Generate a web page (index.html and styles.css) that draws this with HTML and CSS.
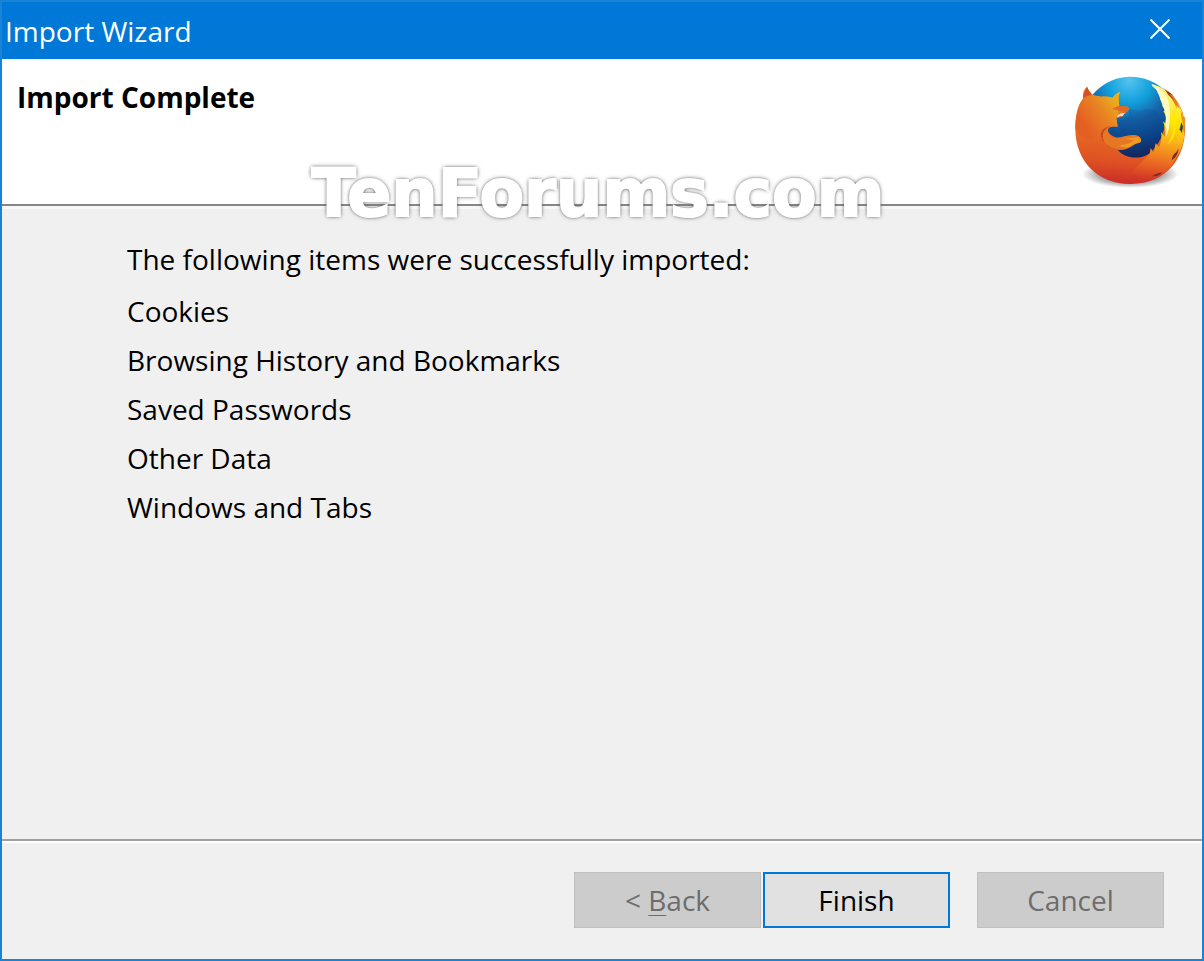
FILE: index.html
```html
<!DOCTYPE html>
<html lang="en">
<head>
    <meta charset="UTF-8">
    <meta name="viewport" content="width=device-width, initial-scale=1.0">
    <title>Import Wizard</title>
    <link rel="stylesheet" href="styles.css">
</head>
<body>
    <div class="window">
        <div class="title-bar">
            <span class="title">Import Wizard</span>
            <button type="button" class="close-btn" aria-label="Close">
                <svg width="20" height="20" viewBox="0 0 20 20" fill="none" stroke="#fff" stroke-width="2">
                    <path d="M0.500 0.500L19.500 19.500M19.500 0.500L0.500 19.500"/>
                </svg>
            </button>
        </div>

        <header class="wizard-header">
            <h1>Import Complete</h1>
            <svg class="logo" viewBox="39 30 342 345" aria-hidden="true">
                <defs>
                    <radialGradient id="globe" gradientUnits="userSpaceOnUse" cx="208" cy="45" r="240">
                        <stop offset="0" stop-color="#55c3ef"/>
                        <stop offset="0.28" stop-color="#12a0dc"/>
                        <stop offset="0.5" stop-color="#1763aa"/>
                        <stop offset="0.75" stop-color="#0a4589"/>
                        <stop offset="1" stop-color="#1a1e51"/>
                    </radialGradient>
                    <linearGradient id="body" gradientUnits="userSpaceOnUse" x1="170" y1="90" x2="150" y2="357">
                        <stop offset="0" stop-color="#eb981e"/>
                        <stop offset="0.4" stop-color="#e66c23"/>
                        <stop offset="0.75" stop-color="#df5124"/>
                        <stop offset="1" stop-color="#c92a27"/>
                    </linearGradient>
                    <linearGradient id="head" gradientUnits="userSpaceOnUse" x1="80" y1="190" x2="175" y2="120">
                        <stop offset="0" stop-color="#e46022"/>
                        <stop offset="0.6" stop-color="#e98522"/>
                        <stop offset="1" stop-color="#e9ad1d"/>
                    </linearGradient>
                    <linearGradient id="tail" gradientUnits="userSpaceOnUse" x1="325" y1="70" x2="275" y2="345">
                        <stop offset="0" stop-color="#fff18c"/>
                        <stop offset="0.35" stop-color="#ffe500"/>
                        <stop offset="0.55" stop-color="#f9b51a"/>
                        <stop offset="0.8" stop-color="#ec6c21"/>
                        <stop offset="1" stop-color="#df5124" stop-opacity="0"/>
                    </linearGradient>
                    <radialGradient id="shadow">
                        <stop offset="0" stop-color="#000" stop-opacity="0.8"/>
                        <stop offset="0.6" stop-color="#000" stop-opacity="0.4"/>
                        <stop offset="1" stop-color="#000" stop-opacity="0"/>
                    </radialGradient>
                </defs>
                <ellipse cx="211" cy="327" rx="145" ry="42" fill="url(#shadow)"/>
                <circle cx="212" cy="182" r="147" fill="url(#globe)"/>
                <path d="M238 137Q274 124 298 145L302 230L264 267Q232 286 194 269L176 250Q225 258 242 231Q226 208 198 214Q178 207 177 171L207 151L207 133Z" fill="#0a3678" opacity="0.15"/>
                <!-- body -->
                <path d="M69 101C68 85 73 72 81 66C86 76 92 85 99 91L124 95Q142 94 158 98Q166 84 181 80C174 91 176 109 178 123L204 125Q209 132 203 139Q193 146 187 154L169 160L173 185Q151 182 141 192C146 208 165 223 185 216Q201 213 215 212Q236 208 243 225C246 235 231 233 222 239C207 249 197 256 174 255C192 278 235 287 267 266Q310 232 318 160L326 80C360 107 376 150 375 190C376 275 323 357 211 357C115 357 46 290 46 192C46 151 54 119 69 101Z" fill="url(#body)"/>
                <path d="M69 101C68 85 73 72 81 66C86 76 92 85 99 91L124 95Q142 94 158 98Q166 84 181 80C174 91 176 109 178 123L169 160L173 185Q149 180 134 192Q117 204 137 224C93 216 73 239 46 192C46 151 54 119 69 101Z" fill="url(#head)"/>
                <path d="M70 99Q70 81 81 66Q85 78 97 89Q79 92 70 99Z" fill="#d94e29"/>
                <path d="M156 131L177 122L203 125Q209 132 203 139Q193 146 187 154L168 158Q177 144 193 140Q178 139 156 131Z" fill="#df6a25"/>
                <path d="M172 151Q181 143 195 143L187 154Q179 150 172 158Z" fill="#fbdfc4"/>
                <path d="M120 214Q118 190 151 182Q137 196 150 213Q166 225 194 214Q240 203 243 225C246 235 231 233 222 239C206 250 187 259 158 248Q126 238 128 209Z" fill="#e67824"/>
                <path d="M122 214Q119 191 150 183Q130 194 128 209Q126 238 158 248Q132 240 122 214Z" fill="#c9441f"/>
                <path d="M194 222Q219 218 238 216Q246 226 241 231Q219 237 208 245Q190 250 178 241Q213 238 222 226Z" fill="#ee9b23"/>
                <!-- tail -->
                <path d="M275 57C305 65 342 87 356 119C366 136 373 166 371 190Q379 235 347 280Q327 324 286 334Q249 340 211 326Q250 286 269 266L272 249L281 263L287 235L297 247Q308 222 303 201L314 215Q317 190 309 168L321 180Q321 154 310 139L315 136L306 121L314 118L300 103L309 101L291 82L301 85L276 63Z" fill="url(#tail)"/>
                <path d="M280 58Q309 76 323 102Q331 126 330 158L326 193L319 215Q322 197 316 178Q322 147 307 119Q298 87 280 58Z" fill="#fff9be"/>
                <path d="M308 68Q348 88 360 132L349 121L351 133Q337 97 320 85L325 86Z" fill="#e37d24"/>
                <path d="M315 74L340 91L328 87L345 107L326 91Z" fill="#933823"/>
                <path d="M362 137Q368 147 370 161L376 154Q377 185 365 214Q373 184 364 158Z" fill="#e69321"/>
                <path d="M364 171L369 185L365 204L359 193Z" fill="#344051"/>
                <path d="M356 250Q354 275 335 286Q338 268 349 262ZM306 322Q299 335 276 334L288 327Z" fill="#762b26"/>
                <path d="M342 131Q357 178 338 222L322 241Q350 193 336 163Z" fill="#ffea00"/>
            </svg>
            <div class="watermark">TenForums.com</div>
        </header>

        <main class="content">
            <p>The following items were successfully imported:</p>
            <ul class="items">
                <li>Cookies</li>
                <li>Browsing History and Bookmarks</li>
                <li>Saved Passwords</li>
                <li>Other Data</li>
                <li>Windows and Tabs</li>
            </ul>
        </main>

        <footer class="actions">
            <button type="button" disabled>&lt; <span class="access-key">B</span>ack</button>
            <button type="button" class="finish-btn">Finish</button>
            <button type="button" class="cancel-btn" disabled>Cancel</button>
        </footer>
    </div>
</body>
</html>
```

FILE: styles.css
```css
* {
    margin: 0;
    padding: 0;
    box-sizing: border-box;
}

body {
    font-family: "Open Sans", "Noto Sans", sans-serif;
    font-size: 28px;
    line-height: 40px;
    color: #000;
}

.window {
    display: flex;
    flex-direction: column;
    min-height: 100vh;
    border: 2px solid #1883d7;
    background-color: #f0f0f0;
}

.title-bar {
    display: flex;
    justify-content: space-between;
    align-items: center;
    height: 57px;
    padding-left: 3px;
    background-color: #0078d7;
    color: white;
}

.close-btn {
    display: flex;
    justify-content: center;
    align-items: center;
    width: 84px;
    height: 54px;
    align-self: flex-start;
    border: none;
    background: none;
}

.wizard-header {
    position: relative;
    display: flex;
    justify-content: space-between;
    align-items: flex-start;
    min-height: 150px;
    padding: 16px 15px;
    background-color: white;
    border-bottom: 3px solid #f8f8f8;
    box-shadow: inset 0 -2px #868686;
}

h1 {
    font-size: 28px;
    line-height: 44px;
    font-weight: 700;
}

.logo {
    width: 114px;
    height: 115px;
}

/* sits across the line between header and content */
.watermark {
    position: absolute;
    left: 0;
    right: 0;
    bottom: -28px;
    padding-right: 8px;
    font-family: "DejaVu Sans", sans-serif;
    font-size: 65px;
    line-height: 80px;
    font-weight: 700;
    text-align: center;
    color: white;
    -webkit-text-stroke: 2px white;
    text-shadow: 0 0 3px #444, 0 0 5px #666;
}

.content {
    flex: 1;
    padding: 30px 125px;
}

.items {
    margin-top: 8px;
    list-style: none;
    line-height: 49px;
}

.actions {
    display: flex;
    gap: 2px;
    justify-content: flex-end;
    padding: 31px 38px;
    border-top: 2px solid #a0a0a0;
    box-shadow: inset 0 2px white;
}

.actions button {
    width: 187px;
    height: 56px;
    border: 1px solid #bfbfbf;
    background-color: #ccc;
    color: #6d6d6d;
    font: inherit;
}

.actions .finish-btn {
    border: 2px solid #0078d7;
    background-color: #e1e1e1;
    color: #000;
}

.actions .cancel-btn {
    margin-left: 25px;
}

.access-key {
    text-decoration: underline;
    text-decoration-thickness: 1px;
    text-underline-offset: 4px;
}
```
